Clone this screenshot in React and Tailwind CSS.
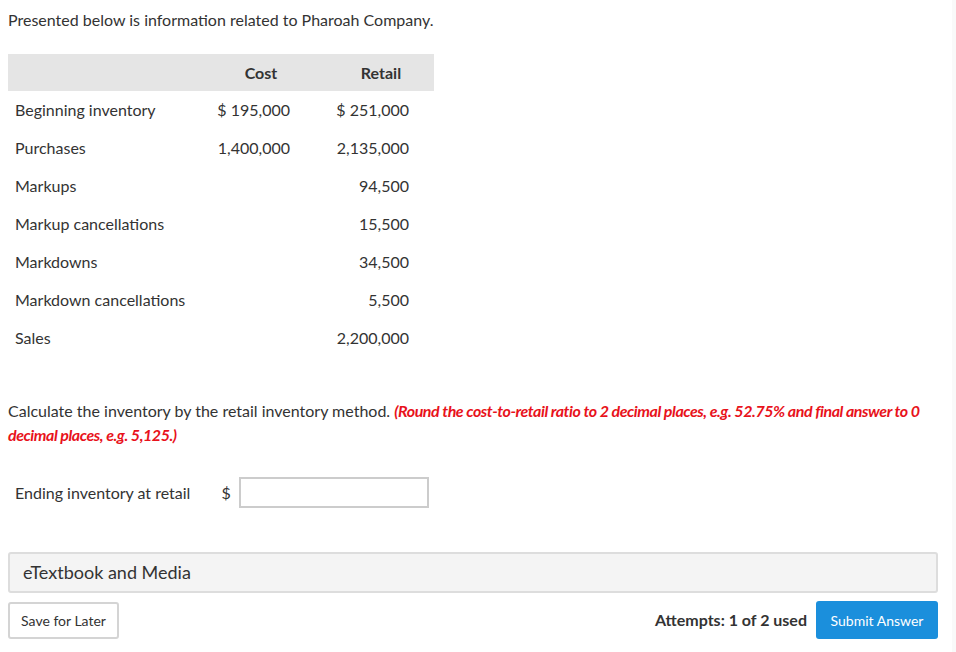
import React from "react";

const rows = [
  { label: "Beginning inventory", cost: "$ 195,000", retail: "$ 251,000" },
  { label: "Purchases", cost: "1,400,000", retail: "2,135,000" },
  { label: "Markups", cost: "", retail: "94,500" },
  { label: "Markup cancellations", cost: "", retail: "15,500" },
  { label: "Markdowns", cost: "", retail: "34,500" },
  { label: "Markdown cancellations", cost: "", retail: "5,500" },
  { label: "Sales", cost: "", retail: "2,200,000" },
];

export default function App() {
  return (
    <div className="flex min-h-[652px] bg-white text-[#333] font-['Lato','Liberation_Sans',sans-serif]">
      <div className="w-[952px] pl-2 pr-[14px]">
        {/* intro */}
        <p className="pt-[10px] text-[16px] leading-[20px]">
          Presented below is information related to Pharoah Company.
        </p>

        {/* data table */}
        <div className="mt-[24px] w-[426px] text-[16px]">
          <div className="flex h-[37px] items-center bg-[#e5e5e5] font-bold">
            <div className="w-[200px]"></div>
            <div className="w-[106px] text-center">Cost</div>
            <div className="w-[120px] pl-[14px] text-center">Retail</div>
          </div>
          {rows.map((r) => (
            <div key={r.label} className="flex h-[38px] items-center">
              <div className="w-[200px] pl-[7px]">{r.label}</div>
              <div className="w-[106px] pr-[24px] text-right">{r.cost}</div>
              <div className="w-[120px] pr-[25px] text-right">{r.retail}</div>
            </div>
          ))}
        </div>

        {/* instructions */}
        <p className="mt-[42px] text-[16px] leading-[24px]">
          Calculate the inventory by the retail inventory method.{" "}
          <span className="font-bold italic tracking-[-0.45px] text-[#e8121b]">
            (Round the cost-to-retail ratio to 2 decimal places, e.g. 52.75% and final answer to 0
            decimal places, e.g. 5,125.)
          </span>
        </p>

        {/* answer row */}
        <div className="mt-[30px] flex items-center text-[16px]">
          <span className="pl-[7px]">Ending inventory at retail</span>
          <span className="ml-[31px] w-[18px]">$</span>
          <input
            type="text"
            className="h-[31px] w-[190px] border-2 border-[#cccccc] bg-white outline-none"
          />
        </div>

        {/* eTextbook */}
        <div className="mt-[44px] flex h-[41px] items-center rounded-[3px] border-2 border-[#dddddd] bg-[#f4f4f4] pl-[13px] text-[18px]">
          eTextbook and Media
        </div>

        {/* footer */}
        <div className="mt-[8px] flex items-center">
          <button className="h-[37px] w-[111px] rounded-[3px] border-2 border-[#d4d4d4] bg-white text-[14px] text-[#333]">
            Save for Later
          </button>
          <div className="ml-auto flex items-center">
            <span className="text-[16px] font-bold">Attempts: 1 of 2 used</span>
            <button className="ml-[9px] h-[38px] w-[122px] rounded-[3px] bg-[#1b8fdc] text-[14px] text-white">
              Submit Answer
            </button>
          </div>
        </div>
      </div>
      <div className="w-[4px] bg-[#f9f9f9]"></div>
    </div>
  );
}
